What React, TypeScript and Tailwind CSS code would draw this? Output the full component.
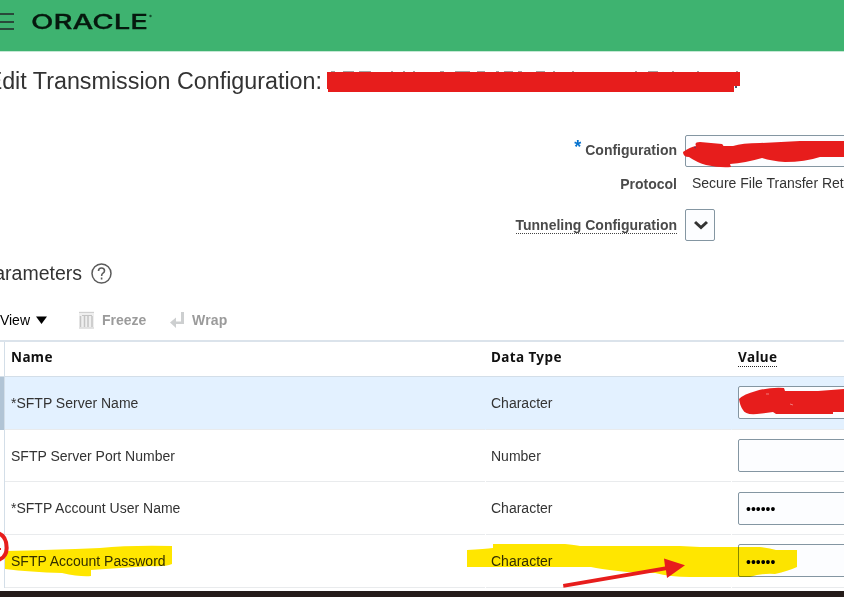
import { ReactNode } from "react";

const rows = [
  { name: "*SFTP Server Name", type: "Character", value: "", selected: true },
  { name: "SFTP Server Port Number", type: "Number", value: "" },
  { name: "*SFTP Account User Name", type: "Character", value: "••••••" },
  { name: "SFTP Account Password", type: "Character", value: "••••••" },
];

const Header = () => (
  <header className="flex h-[52px] shrink-0 items-start border-b border-[#c5e8d4] bg-[#3eb370]">
    <div className="mt-[13px] flex h-[17px] w-[14px] flex-col justify-between">
      <span className="h-[2px] bg-[#29493a]" />
      <span className="h-[2px] bg-[#29493a]" />
      <span className="h-[2px] bg-[#29493a]" />
    </div>
    <svg className="mt-[10px] ml-[17px]" width="124" height="24" viewBox="0 0 124 24">
      <text
        x="0"
        y="19"
        textLength="117"
        lengthAdjust="spacingAndGlyphs"
        className="fill-[#06180e] font-['Inter',sans-serif] text-[20px] font-medium"
        stroke="#06180e"
        strokeWidth="0.3"
      >
        ORACLE
      </text>
      <circle cx="119.5" cy="6" r="1.2" fill="#14512f" />
    </svg>
  </header>
);

const FormRow = ({ label, className, children }: { label: ReactNode; className: string; children: ReactNode }) => (
  <div className={`flex items-center ${className}`}>
    <div className="flex w-[677px] shrink-0 justify-end text-[14px] font-bold whitespace-nowrap text-[#4a4a4a]">
      {label}
    </div>
    {children}
  </div>
);

const Toolbar = () => (
  <div className="flex h-5 items-center text-[14px] font-bold text-[#9b9b9b]">
    <div className="flex w-[30px] shrink-0 justify-end font-normal text-black">
      <span>View</span>
    </div>
    <svg className="ml-[6px]" width="11" height="8" viewBox="0 0 11 8">
      <path d="M0 0.5h11L5.5 8z" fill="#000" />
    </svg>
    <svg className="ml-[32px]" width="16" height="18" viewBox="0 0 16 18">
      <rect x="0" y="0.5" width="15" height="17" fill="#efefef" />
      <path d="M0 1.5h15M0 17h15" stroke="#d0d0d0" />
      <path d="M3 4.500h10" stroke="#c4c4c4" />
      <path d="M1.500 5v11M5.500 5v11M9 5v11M13 5v11" stroke="#c4c4c4" strokeWidth="1.500" />
    </svg>
    <span className="ml-[7px] w-[46px]">Freeze</span>
    <svg className="ml-[22px]" width="15" height="16" viewBox="0 0 15 16">
      <path d="M11 0h3v12H6v4L0 10.500l6-5v4h5z" fill="#cdcfd0" />
    </svg>
    <span className="ml-[7px] tracking-[0.2px]">Wrap</span>
  </div>
);

const Table = () => (
  <div className="flex h-[251px] shrink-0 flex-col overflow-hidden border-t-2 border-[#dbe3eb] text-[14px] text-[#333]">
    <div className="flex h-[35px] shrink-0 border-b border-[#d3dee8] font-['Noto_Sans',sans-serif] text-[13.5px] leading-[17px] font-bold tracking-[0.4px] text-[#111]">
      <div className="h-full w-[5px] shrink-0 border-r border-[#d3dee8]" />
      <div className="w-[480px] shrink-0 pt-[7px] pl-[6px]">Name</div>
      <div className="w-[247px] shrink-0 pt-[7px] pl-[6px]">Data Type</div>
      <div className="mt-[7px] ml-[6px] h-[18px] border-b border-dotted border-[#222]">Value</div>
    </div>
    {rows.map((row) => (
      <div key={row.name} className={`flex h-[52.7px] shrink-0 ${row.selected ? "bg-[#e3f1ff]" : "bg-white"}`}>
        <div className={`w-[5px] shrink-0 border-r border-[#d3dee8] ${row.selected ? "bg-[#b1c4d5]" : ""}`} />
        <div className="flex w-[480px] shrink-0 items-center border-b border-[#e9ebed] pt-px pl-[6px]">{row.name}</div>
        <div className="ml-px flex w-[245px] shrink-0 items-center border-b border-[#e9ebed] pt-px pl-[5px]">
          {row.type}
        </div>
        <div className="ml-px flex flex-1 items-center border-b border-[#e9ebed] pl-[6px]">
          <div className="flex h-[33px] w-[160px] shrink-0 items-center rounded-[2px] border border-[#8496a2] bg-[#fcfdff] pt-[3px] pl-[7px] text-[14px] text-black">
            {row.value}
          </div>
        </div>
      </div>
    ))}
  </div>
);

// Marker strokes and scribbles drawn over the page
const Annotations = () => (
  <>
    <svg className="pointer-events-none absolute inset-0 mix-blend-multiply" width="844" height="597" viewBox="0 0 844 597">
      <g fill="#ffe600">
        <path d="M5 551Q50 550 100 548Q130 545 172 546V564Q165 567 150 566L91 570V576Q80 577 62 573Q30 572 5 569z" />
        <path d="M467 550Q485 549 493 548V544H565Q575 545 580 546H680L700 547H760Q770 548 776 550H797V567Q788 571 775 574Q762 573 750 577H690Q670 577 655 573Q635 573 618 571Q600 569 591 567H467z" />
      </g>
    </svg>
    <svg className="pointer-events-none absolute inset-0" width="844" height="597" viewBox="0 0 844 597">
      <path
        d="M331 71.500h4M343 71.500h11M359 71.500h12M391 71.500h2M403 71.500h2M413 71.500h2M440 71.500h4M455 71.500h15M477 71.500h8M496 71.500h3M504 71.500h9M518 71.500h4M536 71.500h9M553 71.500h2M572 71.500h2M635 71.500h2M648 71.500h10M672 71.500h2M697 71.500h2M736 71.500h2"
        stroke="#a3a3a3"
      />
      <path d="M736 88v-5" stroke="#4b5673" strokeWidth="2" />
      <g fill="#e71d1c">
        <path d="M327 72H740V86H734V92H328V89H327z" />
        <path d="M683 152Q690 147 696 146Q694 142 700 142L722 144Q724 146 723 146H733Q742 143 760 143L800 141H844V157H820Q805 162 785 162Q772 161 762 158Q745 163 730 164L731 167Q720 168 706 165Q696 162 689 157Q683 157 683 152z" />
        <path d="M739 399Q744 394 756 391Q770 387 784 388L785 391H818L844 389V412H833V414H776L773 412L757 414Q745 415 743 410Q740 406 739 399z" />
        <path d="M563 584L665 566.500L664 558.500L685 565.200L667 578L666 570.300L563.500 587.800z" />
      </g>
      <path d="M-3 533Q6.500 535 6.700 548Q6.500 558 -3 560.500" fill="none" stroke="#e71d1c" strokeWidth="4" />
      <path d="M-1 547l2 2-2 2" fill="none" stroke="#e71d1c" />
      <path d="M766 394h3M790 404l3 1" fill="none" stroke="#f07c7c" />
      <path d="M694 147l2 1" fill="none" stroke="#5a3a6a" />
    </svg>
  </>
);

const App = () => {
  return (
    <div className="relative flex h-[597px] w-[844px] flex-col overflow-hidden bg-white font-['Liberation_Sans',Arial,sans-serif]">
      <Header />
      <div className="mt-[14px] flex h-[30px] w-[322px] shrink-0 items-center justify-end">
        <h1 className="text-[23.3px] whitespace-nowrap text-[#333]">Edit Transmission Configuration:</h1>
      </div>
      <div className="mt-[39px] shrink-0">
        <FormRow
          className="h-[32px]"
          label={
            <>
              <span className="mr-[4px] -mt-[4px] text-[18px] leading-5 text-[#0572ce]">*</span>
              <span className="-mt-px">Configuration</span>
            </>
          }
        >
          <div className="ml-[8px] h-[32px] w-[170px] shrink-0 rounded-[2px] border border-[#8496a2] bg-[#fcfdff]" />
        </FormRow>
        <FormRow className="h-[32px]" label={<span className="pt-[2px]">Protocol</span>}>
          <span className="ml-[15px] text-[14px] whitespace-nowrap text-[#333]">Secure File Transfer Retrieval</span>
        </FormRow>
        <FormRow
          className="mt-[10px] h-[32px]"
          label={
            <span className="mt-px h-[17px] border-b border-dotted border-[#444] leading-[17px]">
              Tunneling Configuration
            </span>
          }
        >
          <div className="ml-[8px] flex h-[32px] w-[30px] items-center justify-center rounded-[2px] border border-[#8496a2] bg-[#fcfdff] pl-[2px]">
            <svg width="14" height="10" viewBox="0 0 14 10">
              <path d="M1 2l6 5.500L13 2" fill="none" stroke="#333" strokeWidth="3" />
            </svg>
          </div>
        </FormRow>
      </div>
      <div className="mt-[21px] flex h-[24px] shrink-0 items-center">
        <div className="-mt-px flex w-[82px] shrink-0 justify-end text-[19.5px] text-[#333]">Parameters</div>
        <svg className="ml-[9px]" width="22" height="22" viewBox="0 0 22 22">
          <circle cx="10.500" cy="10.500" r="9.500" fill="none" stroke="#5b5b5b" strokeWidth="1.500" />
          <path
            d="M7.500 8Q7.500 5 10.500 5T13.500 7.700Q13.500 9.200 12 10.200Q10.600 11.100 10.600 13M10.600 14.500V16.500"
            fill="none"
            stroke="#5b5b5b"
            strokeWidth="1.600"
          />
        </svg>
      </div>
      <div className="mt-[24px] mb-[10px] shrink-0">
        <Toolbar />
      </div>
      <Table />
      <div className="h-[7px] shrink-0 bg-[#251c1a]" />
      <Annotations />
    </div>
  );
};

export default App;
